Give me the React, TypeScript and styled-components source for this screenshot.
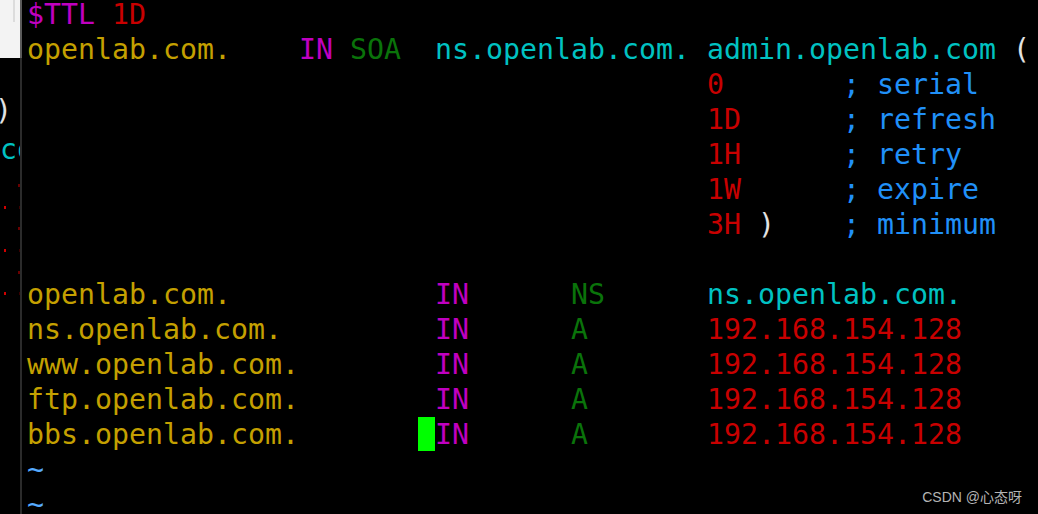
import React from "react";
import styled, { createGlobalStyle } from "styled-components";

const GlobalStyle = createGlobalStyle`
  html, body { margin: 0; padding: 0; background: #000; overflow: hidden; }
  #root { width: 1038px; height: 514px; }
`;

const C = {
  yellow: "#c4a000",
  magenta: "#c000c0",
  green: "#0a730a",
  cyan: "#00c2c2",
  red: "#c80000",
  blue: "#2090f8",
  white: "#e2e2e2",
  tilde: "#55aaff",
};

const Screen = styled.div`
  position: relative;
  display: flex;
  width: 1038px;
  height: 514px;
  background: #000;
  overflow: hidden;
`;

const LeftPane = styled.div`
  width: 20px;
  flex: none;
  display: flex;
  flex-direction: column;
  overflow: hidden;
  font-family: "DejaVu Sans Mono", monospace;
  font-size: 28.24px;
  line-height: 35px;
`;

const TopPanel = styled.div`
  height: 58px;
  flex: none;
  background: #f3f3f3;
  display: flex;
`;

const ScrollThumb = styled.div`
  margin-left: 13px;
  width: 2px;
  height: 22px;
  background: #dcdcdc;
`;

const LeftLine = styled.div<{ $color?: string; $shift?: number; $top?: number }>`
  height: 35px;
  flex: none;
  white-space: pre;
  color: ${(p) => p.$color || "transparent"};
  margin-left: ${(p) => p.$shift || 0}px;
  margin-top: ${(p) => p.$top || 0}px;
`;

const DotsArea = styled.div`
  padding-top: 8px;
  display: flex;
  flex-direction: column;
`;

const DotRow = styled.div`
  height: 21.6px;
  display: flex;
  align-items: center;
`;

const Dot = styled.span<{ $x: number; $color: string; $w: number }>`
  display: block;
  margin-left: ${(p) => p.$x}px;
  width: ${(p) => p.$w}px;
  height: 3px;
  background: ${(p) => p.$color};
`;

const Divider = styled.div`
  width: 2px;
  flex: none;
  background: linear-gradient(#5a5a5a 0 58px, #2b2b2b 58px 100%);
`;

const Terminal = styled.div`
  flex: 1;
  margin-top: -3px;
  padding-left: 5px;
  font-family: "DejaVu Sans Mono", monospace;
  font-size: 28.24px;
  line-height: 35px;
  color: ${C.white};
`;

const Line = styled.div`
  height: 35px;
  white-space: pre;
`;

const Seg = styled.span<{ $color: string }>`
  color: ${(p) => p.$color};
`;

const Cursor = styled.span`
  display: inline-block;
  width: 17px;
  height: 34px;
  vertical-align: top;
  background: #00ff00;
`;

const Watermark = styled.div`
  position: absolute;
  right: 16px;
  bottom: 8px;
  font-family: "Liberation Sans", "Noto Sans CJK SC", sans-serif;
  font-size: 14px;
  color: #b4b4b4;
`;

type S = [number, string, string] | [number, "CURSOR"];

const rows: S[][] = [
  [[0, "$TTL", C.magenta], [5, "1D", C.red]],
  [
    [0, "openlab.com.", C.yellow],
    [16, "IN", C.magenta],
    [19, "SOA", C.green],
    [24, "ns.openlab.com.", C.cyan],
    [40, "admin.openlab.com", C.cyan],
    [58, "(", C.white],
  ],
  [[40, "0", C.red], [48, "; serial", C.blue]],
  [[40, "1D", C.red], [48, "; refresh", C.blue]],
  [[40, "1H", C.red], [48, "; retry", C.blue]],
  [[40, "1W", C.red], [48, "; expire", C.blue]],
  [[40, "3H", C.red], [43, ")", C.white], [48, "; minimum", C.blue]],
  [],
  [
    [0, "openlab.com.", C.yellow],
    [24, "IN", C.magenta],
    [32, "NS", C.green],
    [40, "ns.openlab.com.", C.cyan],
  ],
  ...["ns", "www", "ftp", "bbs"].map((h, i): S[] => [
    [0, `${h}.openlab.com.`, C.yellow],
    ...(i === 3 ? ([[23, "CURSOR"]] as S[]) : []),
    [24, "IN", C.magenta],
    [32, "A", C.green],
    [40, "192.168.154.128", C.red],
  ]),
  [[0, "~", C.tilde]],
  [[0, "~", C.tilde]],
];

function renderRow(segs: S[]) {
  let col = 0;
  const out: React.ReactNode[] = [];
  segs.forEach((s, i) => {
    const [start] = s;
    if (start > col) out.push(" ".repeat(start - col));
    if (s[1] === "CURSOR") {
      out.push(<Cursor key={i} />);
      col = start + 1;
    } else {
      const [, text, color] = s as [number, string, string];
      out.push(
        <Seg key={i} $color={color}>
          {text}
        </Seg>
      );
      col = start + text.length;
    }
  });
  return out;
}

const dotRows = [
  [{ x: 18, w: 2, c: "#6a0000" }],
  [{ x: 4, w: 3, c: "#d00000" }, { x: 13, w: 1, c: "#3a0000" }],
  [{ x: 18, w: 2, c: "#6a0000" }],
  [{ x: 4, w: 3, c: "#d00000" }, { x: 13, w: 1, c: "#3a0000" }],
  [{ x: 18, w: 2, c: "#6a0000" }],
  [{ x: 4, w: 3, c: "#d00000" }, { x: 13, w: 1, c: "#3a0000" }],
];

export default function App() {
  return (
    <>
      <GlobalStyle />
      <Screen>
        <LeftPane>
          <TopPanel>
            <ScrollThumb />
          </TopPanel>
          <LeftLine />
          <LeftLine $color={C.white} $shift={-5}>)</LeftLine>
          <LeftLine $color={C.cyan} $top={4}>co</LeftLine>
          <DotsArea>
            {dotRows.map((r, i) => (
              <DotRow key={i}>
                {r.map((d, j) => (
                  <Dot key={j} $x={d.x} $w={d.w} $color={d.c} />
                ))}
              </DotRow>
            ))}
          </DotsArea>
        </LeftPane>
        <Divider />
        <Terminal>
          {rows.map((r, i) => (
            <Line key={i}>{renderRow(r)}</Line>
          ))}
        </Terminal>
        <Watermark>CSDN @心态呀</Watermark>
      </Screen>
    </>
  );
}
